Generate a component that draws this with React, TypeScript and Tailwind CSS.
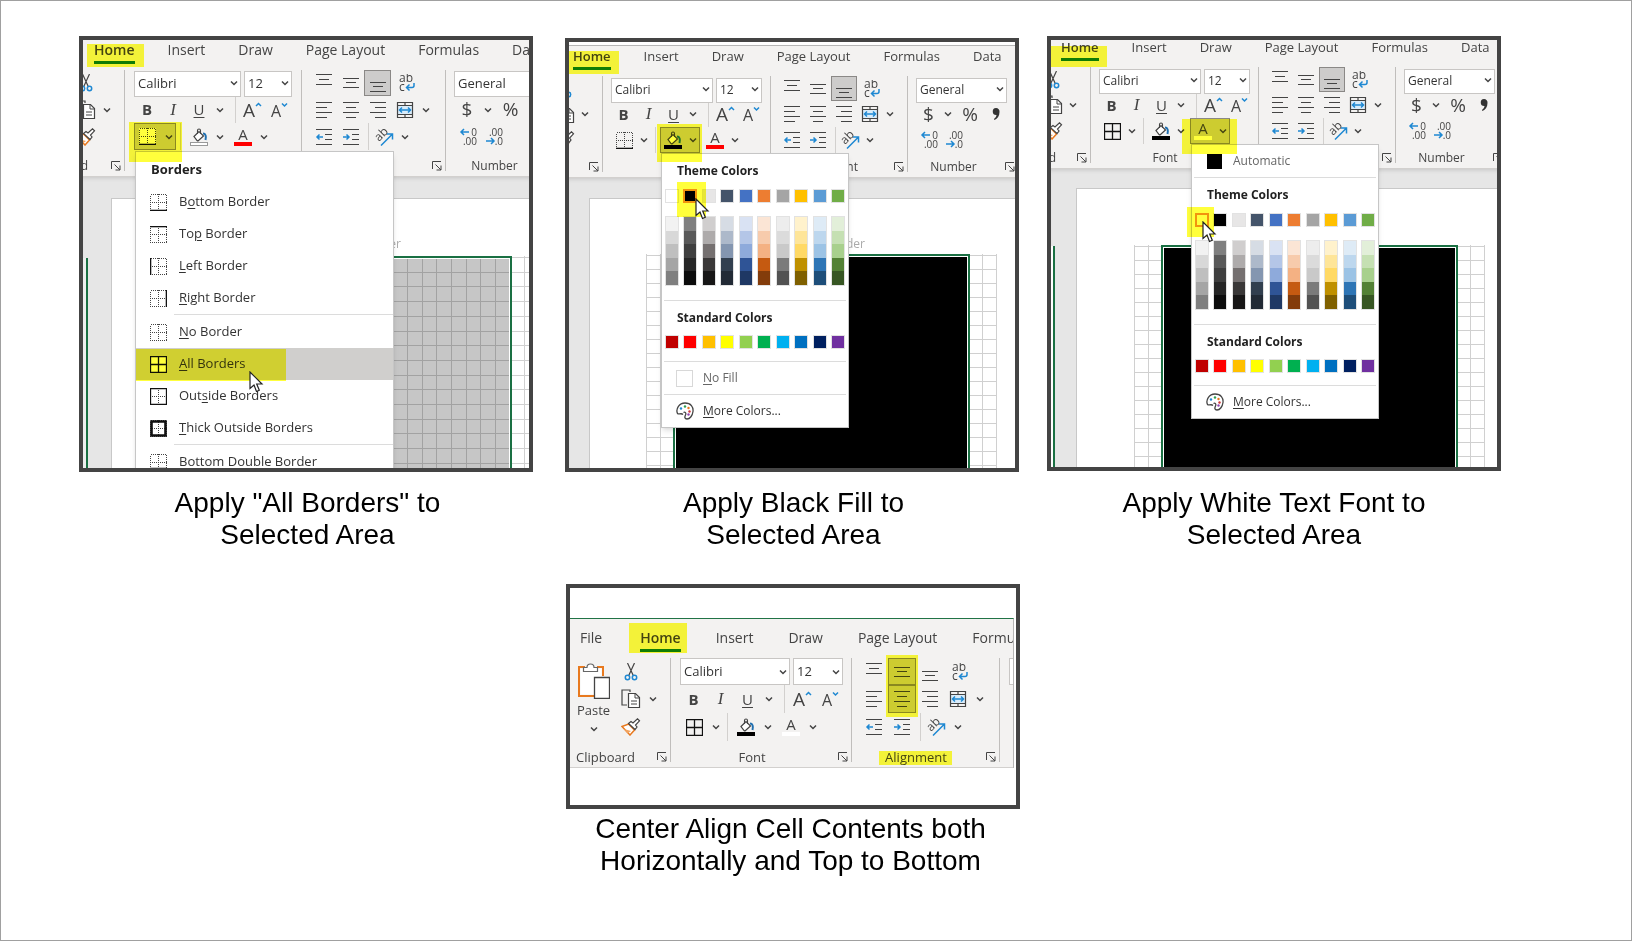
import React from 'react';
import { clsx } from 'clsx';

type Size = 'sm' | 'md' | 'lg';

const sizes = {
  sm: {
    tab: 'text-[13px]', tabGap: 'gap-[33px]', text: 'text-[12px]', label: 'text-[12px] mt-[9px]', combo: 'h-[25px]', row: 'h-[26px]',
    cell: 'w-[26px]', letter: 'w-[25px]', arrow: 'w-[14px]', paste: 'w-[43px]', fontGroup: 'w-[168px] pl-[8px]', alignGroup: 'w-[137px] pl-[8px]',
    numberGroup: 'w-[110px] pl-[8px]', family: 'w-[102px]', fontSize: 'w-[46px]', format: 'w-[91px]',
  },
  md: {
    tab: 'text-[14px]', tabGap: 'gap-[33px]', text: 'text-[13px]', label: 'text-[12px] mt-[11px]', combo: 'h-[26px]', row: 'h-[27px]',
    cell: 'w-[27px]', letter: 'w-[26px]', arrow: 'w-[15px]', paste: 'w-[45px]', fontGroup: 'w-[177px] pl-[9px]', alignGroup: 'w-[144px] pl-[8px]',
    numberGroup: 'w-[116px] pl-[8px]', family: 'w-[107px]', fontSize: 'w-[48px]', format: 'w-[96px]',
  },
  lg: {
    tab: 'text-[14px]', tabGap: 'gap-[35px]', text: 'text-[13px]', label: 'text-[13px] mt-[11px]', combo: 'h-[27px]', row: 'h-[28px]',
    cell: 'w-[28px]', letter: 'w-[27px]', arrow: 'w-[15px]', paste: 'w-[47px]', fontGroup: 'w-[181px] pl-[9px]', alignGroup: 'w-[148px] pl-[8px]',
    numberGroup: 'w-[118px] pl-[9px]', family: 'w-[110px]', fontSize: 'w-[50px]', format: 'w-[98px]',
  },
};

/* ---------- icons ---------- */

const Svg = ({ children, w = 18, h = 18 }: { children: React.ReactNode; w?: number; h?: number }) => (
  <svg width={w} height={h} viewBox={`0 0 ${w} ${h}`} fill="none" stroke="#444" className="block shrink-0" aria-hidden="true">
    {children}
  </svg>
);

const Chevron = () => (
  <Svg w={8} h={6}>
    <path d="M1 1.5 4 4.5 7 1.5" strokeWidth="1.5" />
  </Svg>
);

const Lines = ({ d }: { d: string }) => (
  <Svg w={18} h={20}>
    <path d={d} shapeRendering="crispEdges" />
  </Svg>
);

const lineIcons = {
  top: 'M1 1.5h16M4 6.5h10M1 11.5h16',
  middle: 'M1 5.5h16M4 9.5h10M1 14.5h16',
  bottom: 'M1 9.5h16M4 13.5h10M1 18.5h16',
  left: 'M1 2.5h16M1 7.5h11M1 12.5h16M1 17.5h11',
  center: 'M1 2.5h16M4 7.5h10M1 12.5h16M4 17.5h10',
  right: 'M1 2.5h16M6 7.5h11M1 12.5h16M6 17.5h11',
};

const IndentIcon = ({ out = false }) => (
  <Svg>
    <path d="M1 1.5h16M10 6.5h7M10 11.5h7M1 16.5h16" shapeRendering="crispEdges" />
    {out ? (
      <path d="M8 9H2M4.5 6.5 2 9l2.500 2.500" stroke="#1e88d2" strokeWidth="1.5" />
    ) : (
      <path d="M1 9h6M4.500 6.500 7 9l-2.500 2.500" stroke="#1e88d2" strokeWidth="1.5" />
    )}
  </Svg>
);

const WrapIcon = () => (
  <Svg>
    <text x="1" y="8" fontSize="12" fill="#444" stroke="none">ab</text>
    <text x="1" y="17" fontSize="12" fill="#444" stroke="none">c</text>
    <path d="M16 9v2.500a2 2 0 0 1-2 2H9M11.500 10.500l-3 3 3 3" stroke="#1e88d2" strokeWidth="1.5" />
  </Svg>
);

const MergeIcon = () => (
  <Svg>
    <rect x="1.5" y="5" width="15" height="8" fill="#d9ecfa" stroke="none" />
    <path d="M1.500 1.500h15v15h-15zM1.500 4.500h15M1.500 13.500h15M9 1.500v3M9 13.500v3" strokeWidth="1.2" />
    <path d="M3.500 9h11M6 6.500 3.500 9 6 11.500M12 6.500 14.500 9 12 11.500" stroke="#1e88d2" strokeWidth="1.5" />
  </Svg>
);

const OrientIcon = () => (
  <Svg w={20} h={18}>
    <text x="0" y="0" fontSize="12" fill="#444" stroke="none" transform="translate(5 14) rotate(-45)">ab</text>
    <path d="M7 17.500 18 6.500M13 6h5.500v5.500" stroke="#1e88d2" strokeWidth="1.5" />
  </Svg>
);

type BorderKind = 'none' | 'bottom' | 'top' | 'left' | 'right' | 'all' | 'outside' | 'thick' | 'double';

const borderPaths: Record<BorderKind, string> = {
  none: '',
  bottom: 'M0 16.500h17',
  top: 'M0 .5h17',
  left: 'M.5 0v17',
  right: 'M16.500 0v17',
  all: 'M.5.5h16v16h-16zM8.500 0v17M0 8.500h17',
  outside: 'M.5.5h16v16h-16z',
  thick: 'M1.500 1.500h14v14h-14z',
  double: 'M0 14.500h17M0 16.500h17',
};

const BorderIcon = ({ kind, yellow = false }: { kind: BorderKind; yellow?: boolean }) => (
  <Svg w={17} h={17}>
    {yellow && <path d="M0 0h17v17H0z" fill="#fff" stroke="none" />}
    <path d="M.5.5h16v16h-16zM8.500 0v17M0 8.500h17" stroke="#444" strokeDasharray="1 1" shapeRendering="crispEdges" />
    <path d={borderPaths[kind]} stroke="#111" strokeWidth={kind === 'thick' ? 2.6 : kind === 'all' || kind === 'outside' ? 1.3 : 1.6} />
  </Svg>
);

const FillIcon = ({ color, outline }: { color: string; outline?: string }) => (
  <Svg w={18} h={18}>
    <path d="M4 8.500 9 3.500l4.500 4.500-5 4.500a1 1 0 0 1-1.400 0z" fill="#fff" strokeWidth="1.200" />
    <path d="M7.500 6V2.500a1.500 1.500 0 0 1 3 0V6" strokeWidth="1.100" />
    <path d="M13 5.500c2.500 0 3.500 2.500 2.500 6.500" stroke="#1f6fb0" strokeWidth="2" />
    <rect x="0.5" y="14.5" width="17" height="3" fill={color} stroke={outline || color} />
  </Svg>
);

const FontColorIcon = ({ color }: { color: string }) => (
  <Svg w={18} h={20}>
    <text x="9" y="13" fontSize="15" textAnchor="middle" fill="#444" stroke="none">A</text>
    <rect x="0" y="15" width="18" height="4" fill={color} stroke="none" />
  </Svg>
);

const ScissorsIcon = () => (
  <Svg w={14} h={18}>
    <path d="M3.500 0 9.500 13M10.500 0l-6 13" strokeWidth="1.200" />
    <circle cx="3.500" cy="14.500" r="2.200" stroke="#1e88d2" strokeWidth="1.500" />
    <circle cx="10.500" cy="14.500" r="2.200" stroke="#1e88d2" strokeWidth="1.500" />
  </Svg>
);

const CopyIcon = () => (
  <Svg w={20} h={20}>
    <path d="M6 16H1V1h8v2" strokeWidth="1.200" />
    <path d="M7.500 4.500h7l4 4V18.500h-11z" fill="#fff" strokeWidth="1.200" />
    <path d="M14 4.500V9h4.500M10 12h6M10 15h6" />
  </Svg>
);

const BrushIcon = () => (
  <Svg w={20} h={18}>
    <path d="M1 8.500 7.500 6l6 6L9 17z" fill="#fff" stroke="#e8791e" strokeWidth="1.500" />
    <path d="M3 11l7 2-3.500 2.500z" fill="#f2a35e" stroke="none" />
    <path d="M7.500 5.500 10 3.500l2 1.500L16.500.800l2 2L14.500 7l1.500 2-2 2.500z" fill="#fff" strokeWidth="1.200" />
  </Svg>
);

const PasteIcon = () => (
  <Svg w={32} h={36}>
    <path d="M7 4H1v29h15M19 4h6v9" stroke="#e8791e" strokeWidth="2" />
    <path d="M2.500 5.500h21V14H16v17.500H2.500z" fill="#fff" stroke="none" />
    <path d="M5.500 8.500v-4H9a3.500 3.500 0 0 1 7 0h3.500v4z" fill="#fff" stroke="#666" strokeWidth="1.200" />
    <path d="M16.500 14.500h15v21h-15z" fill="#fff" strokeWidth="1.300" />
  </Svg>
);

const LauncherIcon = () => (
  <Svg w={10} h={10}>
    <path d="M.5 8V.5H9M3.500 3.500 9 9M9 4.500V9H4.500" />
  </Svg>
);

const DecimalIcon = ({ more = false }) => (
  <Svg w={18} h={20}>
    {more ? (
      <>
        <text x="18" y="9" fontSize="10" textAnchor="end" fill="#444" stroke="none">0</text>
        <text x="18" y="18" fontSize="10" textAnchor="end" fill="#444" stroke="none">.00</text>
        <path d="M10 5H2M5 2 2 5l3 3" stroke="#1e88d2" strokeWidth="1.500" />
      </>
    ) : (
      <>
        <text x="17" y="9" fontSize="10" textAnchor="end" fill="#444" stroke="none">.00</text>
        <text x="17" y="18" fontSize="10" textAnchor="end" fill="#444" stroke="none">.0</text>
        <path d="M0 14h8M5 11l3 3-3 3" stroke="#1e88d2" strokeWidth="1.500" />
      </>
    )}
  </Svg>
);

const PaletteIcon = () => (
  <Svg>
    <path
      d="M7 12.500c-2-2-4 .5-5.500-1C-.5 7 3 1 9 1s8.500 4 8 8.500c-.5 4-3 7.500-6 7.500-2.500 0-2.500-2-1.500-4s-.5-3.500-2-2.500"
      strokeWidth="1.300"
    />
    <g stroke="none">
      <circle cx="5" cy="6.500" r="1.200" fill="#1e88d2" />
      <circle cx="9" cy="4.500" r="1.200" fill="#2e9e4f" />
      <circle cx="12.500" cy="6" r="1.200" fill="#e8791e" />
      <circle cx="13.500" cy="9.500" r="1.200" fill="#d13438" />
      <circle cx="12.500" cy="12.500" r="1.200" fill="#8e44ad" />
    </g>
  </Svg>
);

const Cursor = ({ className }: { className: string }) => (
  <svg width="15" height="22" viewBox="0 0 15 22" className={clsx('pointer-events-none absolute', className)} aria-hidden="true">
    <path d="M1 1v16.500l4-3.500 2.500 6.500 2.800-1.200L7.700 13H13z" fill="#fff" stroke="#222" strokeWidth="1.200" />
  </svg>
);

/* ---------- shared pieces ---------- */

const Highlight = ({ className }: { className: string }) => (
  <div className={clsx('pointer-events-none absolute bg-[#ffff3c] mix-blend-multiply', className)} />
);

type CellProps = { label: string; className?: string; active?: boolean; children: React.ReactNode };

const Cell = ({ label, className, active, children }: CellProps) => (
  <button
    type="button"
    aria-label={label}
    className={clsx('flex h-full shrink-0 items-center justify-center', active && 'border border-[#8a8886] bg-[#cdcccb]', className)}
  >
    {children}
  </button>
);

const Split = ({ label, size, active, children }: { label: string; size: Size; active?: boolean; children: React.ReactNode }) => (
  <button
    type="button"
    aria-label={label}
    className={clsx('flex h-full shrink-0 items-center', active && 'bg-[#cdcccb] outline -outline-offset-1 outline-[#8a8886]')}
  >
    <span className={clsx('flex justify-center', sizes[size].cell)}>{children}</span>
    <span className={clsx('flex justify-center', sizes[size].arrow)}>
      <Chevron />
    </span>
  </button>
);

const Combo = ({ label, value, size, className }: { label: string; value: string; size: Size; className: string }) => (
  <div className={clsx('relative shrink-0', sizes[size].combo, className)}>
    <select
      aria-label={label}
      defaultValue={value}
      className={clsx('h-full w-full appearance-none border border-[#c8c6c4] bg-white pl-[3px] text-[#333]', sizes[size].text)}
    >
      <option>{value}</option>
    </select>
    <span className="pointer-events-none absolute inset-y-0 right-[3px] flex items-center">
      <Chevron />
    </span>
  </div>
);

const Divider = ({ className }: { className: string }) => <div className={clsx('h-full w-px shrink-0 bg-[#d2d0ce]', className)} />;

const GroupLabel = ({ text, size, className }: { text: string; size: Size; className?: string }) => (
  <div className={clsx('flex h-[10px] items-center whitespace-nowrap leading-[16px] text-[#444]', sizes[size].label)}>
    <span className={clsx('flex-1 text-center', className)}>{text}</span>
    <button type="button" aria-label={`${text} settings`} className="flex w-[17px] justify-center">
      <LauncherIcon />
    </button>
  </div>
);

/* ---------- ribbon ---------- */

const ClipboardGroup = ({ size, className }: { size: Size; className: string }) => {
  const s = sizes[size];
  return (
    <div className={clsx('flex shrink-0 justify-end overflow-x-clip border-r border-[#c0bebc]', className)}>
      <div className="shrink-0">
        <div className="flex pr-[10px]">
          <div className={clsx('flex flex-col items-center pt-[5px] text-[#444]', s.paste, s.text)}>
            <button type="button" className="flex flex-col items-center leading-[22px]">
              <PasteIcon />
              Paste
            </button>
            <button type="button" aria-label="Paste options" className="mt-[5px]">
              <Chevron />
            </button>
          </div>
          <div>
            <div className={clsx('flex', s.combo)}>
              <Cell label="Cut" className={s.cell}><ScissorsIcon /></Cell>
            </div>
            <div className={clsx('flex', s.row)}>
              <Split label="Copy" size={size}><CopyIcon /></Split>
            </div>
            <div className={clsx('flex', s.row)}>
              <Cell label="Format Painter" className={s.cell}><BrushIcon /></Cell>
            </div>
          </div>
        </div>
        <GroupLabel text="Clipboard" size={size} className="pr-[12px]" />
      </div>
    </div>
  );
};

type RibbonProps = {
  size: Size;
  tabs: string[];
  tabBar: string;
  clipboard: string;
  border: BorderKind;
  fill: string;
  fillOutline?: string;
  fontColor: string;
  vertical?: 'middle' | 'bottom';
  horizontal?: 'center';
  open?: 'border' | 'fill' | 'font';
};

const Ribbon = ({ size, tabs, tabBar, clipboard, border, fill, fillOutline, fontColor, vertical, horizontal, open }: RibbonProps) => {
  const s = sizes[size];
  return (
    <div className="shrink-0 overflow-hidden border-b border-[#d2d0ce] bg-[#f3f2f1] pb-[5px] text-[#444]">
      <nav className={clsx('flex items-end whitespace-nowrap', s.tab, s.tabGap, tabBar)}>
        {tabs.map((tab) => (
          <button
            key={tab}
            type="button"
            className={clsx(
              'shrink-0 border-b-[3px] leading-[22px]',
              tab === 'Home' ? 'border-[#107c10] font-semibold' : 'border-transparent',
              tab === 'File' && 'mr-[3px]',
            )}
          >
            {tab}
          </button>
        ))}
      </nav>

      <div className="flex pt-[6px]">
        <ClipboardGroup size={size} className={clipboard} />

        {/* Font */}
        <div className={clsx('shrink-0 border-r border-[#c0bebc]', s.fontGroup)}>
          <div className="flex gap-[3px]">
            <Combo label="Font" value="Calibri" size={size} className={s.family} />
            <Combo label="Font size" value="12" size={size} className={s.fontSize} />
          </div>
          <div className={clsx('flex items-center', s.row)}>
            <Cell label="Bold" className={clsx(s.letter, 'text-[15px] font-bold')}>B</Cell>
            <Cell label="Italic" className={clsx(s.letter, 'font-[Liberation_Serif,serif] text-[17px] italic')}>I</Cell>
            <Cell label="Underline" className={clsx(s.letter, 'text-[15px] underline underline-offset-2')}>U</Cell>
            <Cell label="Underline options" className={s.arrow}><Chevron /></Cell>
            <Divider className="ml-[8px] mr-[4px]" />
            <Cell label="Increase font size" className={s.letter}>
              <Svg w={20} h={18}>
                <text x="0" y="16" fontSize="19" fill="#444" stroke="none">A</text>
                <path d="M13 5l2.500-2.500L18 5" stroke="#1e88d2" strokeWidth="1.500" />
              </Svg>
            </Cell>
            <Cell label="Decrease font size" className={s.letter}>
              <Svg w={18} h={18}>
                <text x="1" y="16" fontSize="16" fill="#444" stroke="none">A</text>
                <path d="M12 2.500 14.500 5 17 2.500" stroke="#1e88d2" strokeWidth="1.500" />
              </Svg>
            </Cell>
          </div>
          <div className={clsx('flex items-center', s.row)}>
            <Split label="Borders" size={size} active={open === 'border'}>
              <BorderIcon kind={border} yellow={open === 'border'} />
            </Split>
            <Divider className="mx-[4px]" />
            <Split label="Fill Color" size={size} active={open === 'fill'}>
              <FillIcon color={fill} outline={fillOutline} />
            </Split>
            <div className="w-[2px]" />
            <Split label="Font Color" size={size} active={open === 'font'}>
              <FontColorIcon color={fontColor} />
            </Split>
          </div>
          <GroupLabel text="Font" size={size} className="pr-[10px]" />
        </div>

        {/* Alignment */}
        <div className={clsx('shrink-0 border-r border-[#c0bebc]', s.alignGroup)}>
          <div className={clsx('flex', s.combo)}>
            <Cell label="Top Align" className={s.cell}><Lines d={lineIcons.top} /></Cell>
            <Cell label="Middle Align" className={s.cell} active={vertical === 'middle'}><Lines d={lineIcons.middle} /></Cell>
            <Cell label="Bottom Align" className={s.cell} active={vertical === 'bottom'}><Lines d={lineIcons.bottom} /></Cell>
            <Cell label="Wrap Text" className={clsx('ml-[2px]', s.cell)}><WrapIcon /></Cell>
          </div>
          <div className={clsx('flex', s.row)}>
            <Cell label="Align Left" className={s.cell}><Lines d={lineIcons.left} /></Cell>
            <Cell label="Center" className={s.cell} active={horizontal === 'center'}><Lines d={lineIcons.center} /></Cell>
            <Cell label="Align Right" className={s.cell}><Lines d={lineIcons.right} /></Cell>
            <Split label="Merge and Center" size={size}><MergeIcon /></Split>
          </div>
          <div className={clsx('flex', s.row)}>
            <Cell label="Decrease Indent" className={s.cell}><IndentIcon out /></Cell>
            <Cell label="Increase Indent" className={s.cell}><IndentIcon /></Cell>
            <Divider className="ml-[4px] mr-px" />
            <Split label="Orientation" size={size}><OrientIcon /></Split>
          </div>
          <GroupLabel text="Alignment" size={size} className="pr-[10px]" />
        </div>

        {/* Number */}
        <div className={clsx('shrink-0', s.numberGroup)}>
          <Combo label="Number format" value="General" size={size} className={s.format} />
          <div className={clsx('flex', s.row)}>
            <Cell label="Currency" className={clsx(s.letter, 'text-[19px]')}>$</Cell>
            <Cell label="Currency options" className={s.arrow}><Chevron /></Cell>
            <Cell label="Percent" className={clsx('ml-[2px] text-[19px]', s.cell)}>%</Cell>
            <Cell label="Comma" className={s.letter}>
              <Svg w={10} h={14}>
                <path d="M5 1a3.500 3.500 0 0 1 3.500 4c0 4-2 6.500-5 8l-.6-1c1.800-1.200 2.500-2.500 2.600-4A3.500 3.500 0 1 1 5 1z" fill="#333" stroke="none" />
              </Svg>
            </Cell>
          </div>
          <div className={clsx('flex', s.row)}>
            <Cell label="Increase Decimal" className={s.cell}><DecimalIcon more /></Cell>
            <Cell label="Decrease Decimal" className={s.cell}><DecimalIcon /></Cell>
          </div>
          <GroupLabel text="Number" size={size} className="pr-[10px]" />
        </div>
      </div>
    </div>
  );
};

/* ---------- worksheet ---------- */

type SheetProps = { className: string; left: number; top: number; pitch: number; cols: number; sel: [number, number]; fill: string; lines?: boolean; header?: number };

const Sheet = ({ className, left, top, pitch, cols, sel, fill, lines, header }: SheetProps) => {
  const xs = Array.from({ length: cols + 1 }, (_, i) => Math.round(left + i * pitch) + 0.5);
  const ys = Array.from({ length: 18 }, (_, i) => Math.round(top + 1 + i * pitch) + 0.5);
  const right = left + cols * pitch;
  const grid = xs.map((x) => `M${x} ${top}V400`).join('') + ys.map((y) => `M${left} ${y}H${right}`).join('');
  return (
    <div className={clsx('min-h-0 flex-1 bg-[#e6e6e6] shadow-[inset_0_4px_4px_-3px_rgba(0,0,0,0.15)]', className)}>
      <div className="h-full border-l border-t border-[#c8c8c8] bg-white">
        <svg className="block h-full w-full" aria-hidden="true">
          {header && <text x={header} y="49" fontSize="12" textAnchor="end" fill="#aaa">Header</text>}
          <path d={grid} stroke="#d0d0d0" />
          <rect x={sel[0] + 1} y={top + 1} width={sel[1] - sel[0] - 2} height="400" fill="#fff" stroke="#1a7043" strokeWidth="2" />
          <rect x={sel[0] + 3} y={top + 3} width={sel[1] - sel[0] - 6} height="400" fill={fill} />
          {lines && (
            <svg x={sel[0] + 3} y={top + 3} width={sel[1] - sel[0] - 6} height="400">
              <path d={grid} stroke="#a2a2a2" transform={`translate(${-sel[0] - 3} ${-top - 3})`} />
            </svg>
          )}
        </svg>
      </div>
    </div>
  );
};

/* ---------- menus ---------- */

// the letter after "_" is the access key
const Accel = ({ text }: { text: string }) => {
  const [before, rest] = text.split('_');
  return (
    <span>
      {before}
      <span className="underline underline-offset-2">{rest[0]}</span>
      {rest.slice(1)}
    </span>
  );
};

const borderItems: { text: string; kind: BorderKind; line?: boolean }[] = [
  { text: 'B_ottom Border', kind: 'bottom' },
  { text: 'To_p Border', kind: 'top' },
  { text: '_Left Border', kind: 'left' },
  { text: '_Right Border', kind: 'right' },
  { text: '_No Border', kind: 'none', line: true },
  { text: '_All Borders', kind: 'all' },
  { text: 'Out_side Borders', kind: 'outside' },
  { text: '_Thick Outside Borders', kind: 'thick' },
  { text: '_Bottom Double Border', kind: 'double', line: true },
];

const BordersMenu = () => (
  <div className="absolute left-[52px] top-[111px] w-[259px] border border-[#c6c6c6] bg-white text-[13px] text-[#333] shadow-md">
    <div className="h-[34px] pl-[15px] font-bold leading-[34px] text-[#222]">Borders</div>
    {borderItems.map((item) => (
      <React.Fragment key={item.text}>
        {item.line && <div className="mb-px ml-[38px] h-px bg-[#dcdcdc]" />}
        <button
          type="button"
          className={clsx('flex h-[32px] w-full items-center gap-[12px] pl-[14px] text-left', item.kind === 'all' && 'bg-[#d0cfcd]')}
        >
          <BorderIcon kind={item.kind} yellow={item.kind === 'all'} />
          <Accel text={item.text} />
        </button>
      </React.Fragment>
    ))}
  </div>
);

const theme = ['#ffffff', '#000000', '#e7e6e6', '#44546a', '#4472c4', '#ed7d31', '#a5a5a5', '#ffc000', '#5b9bd5', '#70ad47'];

const shades = [
  ['#f2f2f2', '#d8d8d8', '#bfbfbf', '#a5a5a5', '#7f7f7f'],
  ['#7f7f7f', '#595959', '#3f3f3f', '#262626', '#0c0c0c'],
  ['#d0cece', '#aeabab', '#757070', '#3a3838', '#171616'],
  ['#d6dce4', '#adb9ca', '#8496b0', '#323f4f', '#222a35'],
  ['#d9e2f3', '#b4c6e7', '#8eaadb', '#2f5496', '#1f3864'],
  ['#fbe5d5', '#f7cbac', '#f4b183', '#c55a11', '#833c0b'],
  ['#ededed', '#dbdbdb', '#c9c9c9', '#7b7b7b', '#525252'],
  ['#fff2cc', '#fee599', '#ffd965', '#bf9000', '#7f6000'],
  ['#deebf6', '#bdd7ee', '#9cc3e5', '#2e75b5', '#1e4e79'],
  ['#e2efd9', '#c5e0b3', '#a8d08d', '#538135', '#375623'],
];

const standard = ['#c00000', '#ff0000', '#ffc000', '#ffff00', '#92d050', '#00b050', '#00b0f0', '#0070c0', '#002060', '#7030a0'];

const Swatches = ({ colors, selected }: { colors: string[]; selected?: number }) => (
  <div className="flex justify-between px-[4px]">
    {colors.map((color, i) => (
      <button
        key={color}
        type="button"
        aria-label={color}
        className={clsx('h-[12px] w-[12px]', i === selected ? 'outline-2 -outline-offset-1 outline-[#f29436]' : 'outline outline-[#e2e2e2]')}
        style={{ backgroundColor: color }}
      />
    ))}
  </div>
);

const Rule = () => <div className="mx-[2px] h-px bg-[#dcdcdc]" />;

const ColorMenu = ({ className, kind, selected }: { className: string; kind: 'fill' | 'font'; selected: number }) => (
  <div className={clsx('absolute w-[188px] border border-[#c6c6c6] bg-white text-[12px] text-[#333] shadow-md', className)}>
    {kind === 'font' && (
      <>
        <button type="button" className="flex h-[32px] w-full items-center gap-[11px] pl-[15px] text-[#666]">
          <span className="h-[15px] w-[15px] bg-black" />
          Automatic
        </button>
        <Rule />
      </>
    )}
    <div className="h-[36px] pl-[15px] font-bold leading-[34px] text-[#222]">Theme Colors</div>
    <Swatches colors={theme} selected={selected} />
    <div className="mb-[15px] mt-[15px] flex justify-between px-[4px]">
      {shades.map((column) => (
        <div key={column[0]} className="flex h-[68px] w-[12px] flex-col outline outline-[#e2e2e2]">
          {column.map((color) => (
            <button key={color} type="button" aria-label={color} className="flex-1" style={{ backgroundColor: color }} />
          ))}
        </div>
      ))}
    </div>
    <Rule />
    <div className="h-[35px] pl-[15px] font-bold leading-[34px] text-[#222]">Standard Colors</div>
    <Swatches colors={standard} />
    <div className="h-[13px]" />
    <Rule />
    {kind === 'fill' && (
      <>
        <button type="button" className="flex h-[32px] w-full items-center gap-[10px] pl-[14px] text-[#666]">
          <span className="h-[17px] w-[17px] border border-[#d8d8d8]" />
          <Accel text="_No Fill" />
        </button>
        <Rule />
      </>
    )}
    <button type="button" className="flex h-[32px] w-full items-center gap-[9px] pl-[14px]">
      <PaletteIcon />
      <Accel text="_More Colors..." />
    </button>
  </div>
);

/* ---------- page ---------- */

const Figure = ({ className, panel, caption, children }: { className?: string; panel: string; caption: React.ReactNode; children: React.ReactNode }) => (
  <figure className={clsx('w-[454px] shrink-0', className)}>
    <div className={clsx('relative flex flex-col overflow-hidden border-4 border-[#444] bg-white font-[Open_Sans,sans-serif]', panel)}>{children}</div>
    <figcaption className="text-center text-[28px] leading-[32px] text-black">{caption}</figcaption>
  </figure>
);

const tabs = ['Home', 'Insert', 'Draw', 'Page Layout', 'Formulas', 'Data'];

const App = () => {
  return (
    <main className="min-h-screen border border-[#a0a0a0] bg-white pl-[78px] pt-[35px] font-[Liberation_Sans,Arial,sans-serif]">
      <div className="flex items-start">
        <Figure
          className="mr-[32px]"
          panel="h-[436px] mb-[15px]"
          caption={<span className="block pl-[3px]">Apply "All Borders" to<br />Selected Area</span>}
        >
          <Ribbon
            size="md" tabs={tabs} tabBar="h-[24px] pl-[11px]" clipboard="w-[42px]"
            border="bottom" fill="#ffffff" fillOutline="#999" fontColor="#ff0000" vertical="bottom" open="border"
          />
          <Sheet className="pl-[28px] pt-[21px]" left={236} top={57} pitch={14.7} cols={14} sel={[236, 400]} fill="#c6c6c6" lines header={289} />
          <div className="absolute bottom-0 left-0 top-[218px] w-[5px] border-r-2 border-[#1a7043] bg-[#eee]" />
          <BordersMenu />
          <Highlight className="left-[4px] top-[4px] h-[23px] w-[57px]" />
          <Highlight className="left-[46px] top-[82px] h-[40px] w-[53px]" />
          <Highlight className="left-[53px] top-[309px] h-[32px] w-[150px]" />
          <Cursor className="left-[166px] top-[331px]" />
        </Figure>

        <Figure
          className="mr-[28px] mt-[2px]"
          panel="h-[434px] mb-[15px]"
          caption={<span className="block pl-[3px]">Apply Black Fill to<br />Selected Area</span>}
        >
          <div className="h-[4px] shrink-0 border-b border-[#b5b5b5]" />
          <Ribbon
            size="sm" tabs={tabs} tabBar="h-[24px] pl-[4px]" clipboard="w-[34px]"
            border="bottom" fill="#000000" fontColor="#ff0000" vertical="bottom" open="fill"
          />
          <Sheet className="pl-[20px] pt-[20px]" left={56} top={55} pitch={14} cols={25} sel={[83, 380]} fill="#000" header={275} />
          <ColorMenu className="left-[92px] top-[111px]" kind="fill" selected={1} />
          <Highlight className="left-0 top-[9px] h-[23px] w-[50px]" />
          <Highlight className="left-[88px] top-[82px] h-[38px] w-[45px]" />
          <Highlight className="left-[108px] top-[140px] h-[35px] w-[29px]" />
          <Cursor className="left-[126px] top-[156px]" />
        </Figure>

        <Figure panel="h-[435px] mb-[16px]" caption={<>Apply White Text Font to<br />Selected Area</>}>
          <Ribbon
            size="sm" tabs={tabs} tabBar="h-[21px] pl-[10px]" clipboard="w-[40px]"
            border="all" fill="#000000" fontColor="#ffffff" vertical="bottom" open="font"
          />
          <Sheet className="pl-[25px] pt-[19px]" left={57} top={56} pitch={14} cols={25} sel={[84, 381]} fill="#000" />
          <div className="absolute bottom-0 left-0 top-[206px] w-[4px] border-r-2 border-[#1a7043] bg-white" />
          <ColorMenu className="left-[140px] top-[104px]" kind="font" selected={0} />
          <Highlight className="left-0 top-[6px] h-[21px] w-[56px]" />
          <Highlight className="left-[131px] top-[79px] h-[35px] w-[55px]" />
          <Highlight className="left-[136px] top-[167px] h-[30px] w-[27px]" />
          <Cursor className="left-[151px] top-[181px]" />
        </Figure>
      </div>

      <Figure
        className="ml-[487px] mt-[33px]"
        panel="h-[225px] mb-[4px] pt-[30px]"
        caption={<span className="block pr-[5px]">Center Align Cell Contents both<br />Horizontally and Top to Bottom</span>}
      >
        <div className="mr-[2px] border-r border-t border-r-[#b5b5b5] border-t-[#217346]">
          <Ribbon
            size="lg" tabs={['File', ...tabs]} tabBar="h-[33px] pl-[10px]" clipboard="w-[101px]"
            border="all" fill="#000000" fontColor="#ffffff" vertical="middle" horizontal="center"
          />
        </div>
        <Highlight className="left-[59px] top-[35px] h-[30px] w-[58px]" />
        <Highlight className="left-[316px] top-[67px] h-[62px] w-[32px]" />
        <Highlight className="left-[309px] top-[163px] h-[14px] w-[73px]" />
      </Figure>
    </main>
  );
};

export default App;
